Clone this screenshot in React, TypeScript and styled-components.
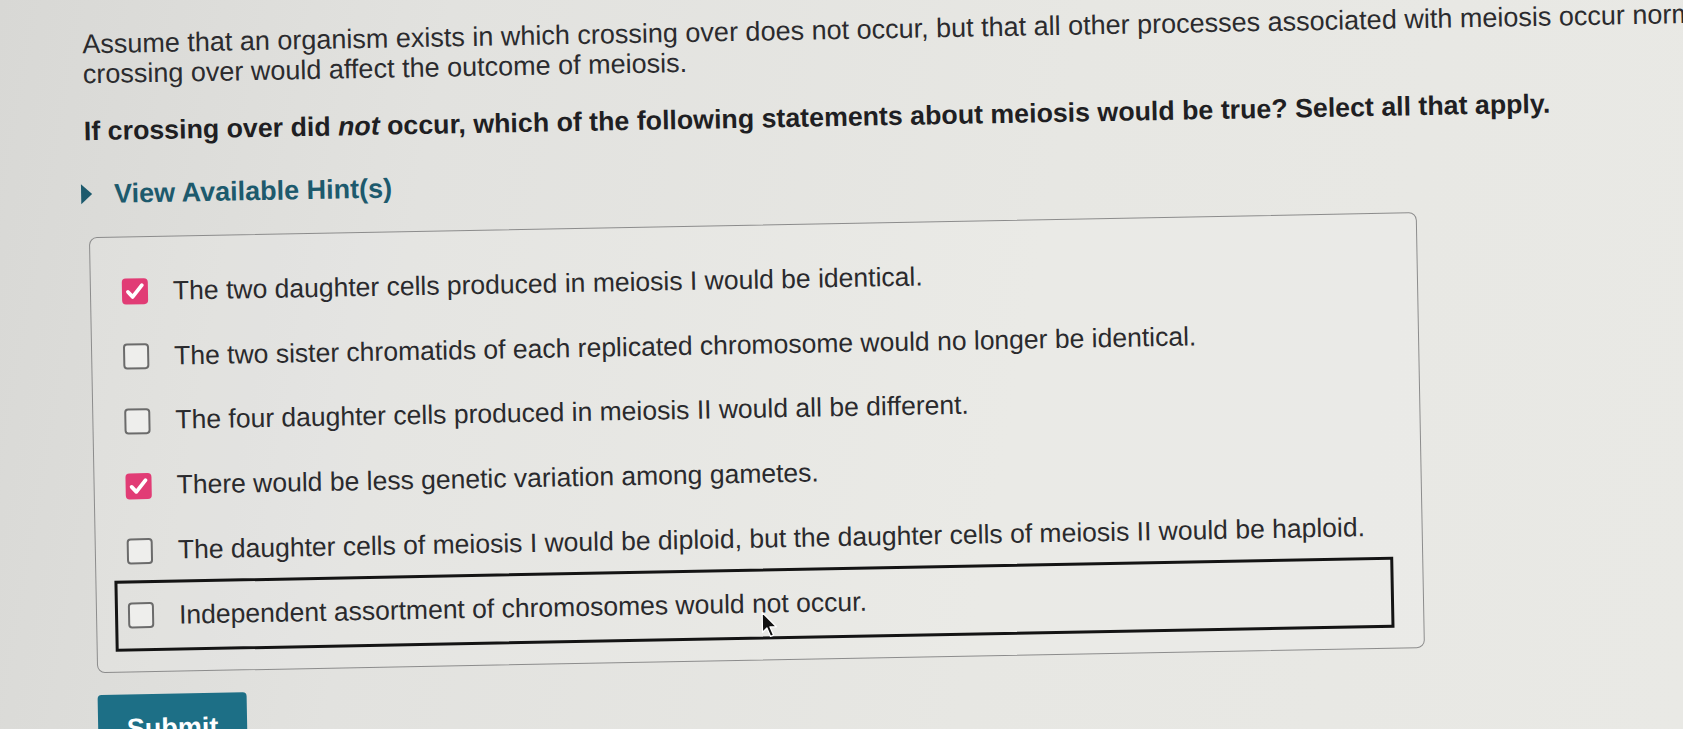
import * as React from "react";
import styled, { createGlobalStyle } from "styled-components";

const GlobalStyle = createGlobalStyle`
  html, body {
    margin: 0;
    height: 100%;
    overflow: hidden;
  }
  body {
    background: linear-gradient(100deg, #d8d8d5 0%, #e2e2df 25%, #e7e7e3 60%, #e9e9e5 100%);
    font-family: "Liberation Sans", Arial, Helvetica, sans-serif;
    color: #2c2c2e;
  }
`;

// the photo was taken slightly tilted, so the whole screen content is rotated a touch
const Page = styled.div`
  position: relative;
  padding: 29px 0 0 89px;
  transform: rotate(-1.08deg);
  transform-origin: 100px 400px;
`;

const Prompt = styled.p`
  margin: 0;
  font-size: 27px;
  line-height: 30px;
  white-space: nowrap;
  color: #2b2b2e;
`;

const Question = styled.p`
  margin: 27px 0 0;
  font-size: 26.75px;
  line-height: 30px;
  font-weight: 700;
  white-space: nowrap;
  color: #1f1f23;

  em {
    font-style: italic;
  }
`;

const HintToggle = styled.div`
  margin-top: 33px;
  display: flex;
  align-items: center;
  gap: 22px;
  font-size: 27px;
  line-height: 30px;
  font-weight: 700;
  color: #1d5a6d;
  cursor: pointer;
`;

const Triangle = styled.span`
  width: 0;
  height: 0;
  margin-left: -4px;
  border-top: 10px solid transparent;
  border-bottom: 10px solid transparent;
  border-left: 11px solid #1d5a6d;
`;

const OptionsBox = styled.div`
  margin: 28px 0 0 3px;
  width: 1328px;
  box-sizing: border-box;
  border: 1.5px solid #8c8c8c;
  border-radius: 8px;
  padding: 22px 32px 23px 21px;
  background: rgba(255, 255, 255, 0.12);
`;

const OptionRow = styled.label<{ $focused?: boolean }>`
  height: 64.8px;
  display: flex;
  align-items: center;
  gap: 25px;
  padding-left: 10px;
  font-size: 26.5px;
  color: #2a2a2d;
  outline: ${({ $focused }) => ($focused ? "3px solid #141414" : "none")};
  cursor: pointer;
`;

const Checkbox = styled.span<{ $checked?: boolean }>`
  flex: none;
  width: 26px;
  height: 26px;
  box-sizing: border-box;
  border-radius: 4px;
  display: flex;
  align-items: center;
  justify-content: center;
  background: ${({ $checked }) => ($checked ? "#e13c75" : "#eeeeec")};
  border: ${({ $checked }) => ($checked ? "none" : "2px solid #6b6b6b")};
`;

const SubmitButton = styled.button`
  margin: 22px 0 0 3px;
  width: 149px;
  height: 60px;
  padding: 19px 0 0 0;
  border: none;
  border-radius: 4px;
  background: #1d6f86;
  color: #fff;
  font-family: inherit;
  font-size: 27px;
  font-weight: 700;
  display: flex;
  justify-content: center;
  align-items: flex-start;
`;

const Pointer = styled.svg`
  position: absolute;
  left: 757px;
  top: 624px;
  width: 18px;
  height: 28px;
  pointer-events: none;
`;

const options = [
  { text: "The two daughter cells produced in meiosis I would be identical.", checked: true },
  { text: "The two sister chromatids of each replicated chromosome would no longer be identical.", checked: false },
  { text: "The four daughter cells produced in meiosis II would all be different.", checked: false },
  { text: "There would be less genetic variation among gametes.", checked: true },
  { text: "The daughter cells of meiosis I would be diploid, but the daughter cells of meiosis II would be haploid.", checked: false },
  { text: "Independent assortment of chromosomes would not occur.", checked: false },
];

const App = () => {
  const [checked, setChecked] = React.useState(options.map((o) => o.checked));

  const toggle = (i: number) => {
    setChecked((prev) => prev.map((c, j) => (j === i ? !c : c)));
  };

  return (
    <>
      <GlobalStyle />
      <Page>
        <Prompt>
          Assume that an organism exists in which crossing over does not occur, but that all other processes associated with meiosis occur normally. Consider how the lack of
          <br />
          crossing over would affect the outcome of meiosis.
        </Prompt>
        <Question>
          If crossing over did <em>not</em> occur, which of the following statements about meiosis would be true? Select all that apply.
        </Question>
        <HintToggle>
          <Triangle />
          View Available Hint(s)
        </HintToggle>
        <OptionsBox>
          {options.map((o, i) => (
            <OptionRow key={i} $focused={i === options.length - 1} onClick={() => toggle(i)}>
              <Checkbox $checked={checked[i]}>
                {checked[i] && (
                  <svg width="26" height="26" viewBox="0 0 26 26">
                    <path
                      d="M6 13.5l4.6 5L20 7"
                      fill="none"
                      stroke="#fff"
                      strokeWidth="3.8"
                      strokeLinecap="round"
                      strokeLinejoin="round"
                    />
                  </svg>
                )}
              </Checkbox>
              {o.text}
            </OptionRow>
          ))}
        </OptionsBox>
        <SubmitButton>Submit</SubmitButton>
        <Pointer viewBox="0 0 18 28">
          <path
            d="M1 1 L1 21 L5.5 16.5 L9 25 L12 23.7 L8.6 15.5 L15 15.5 Z"
            fill="#111"
            stroke="#fff"
            strokeWidth="1.3"
            strokeLinejoin="round"
          />
        </Pointer>
      </Page>
    </>
  );
};

export default App;
